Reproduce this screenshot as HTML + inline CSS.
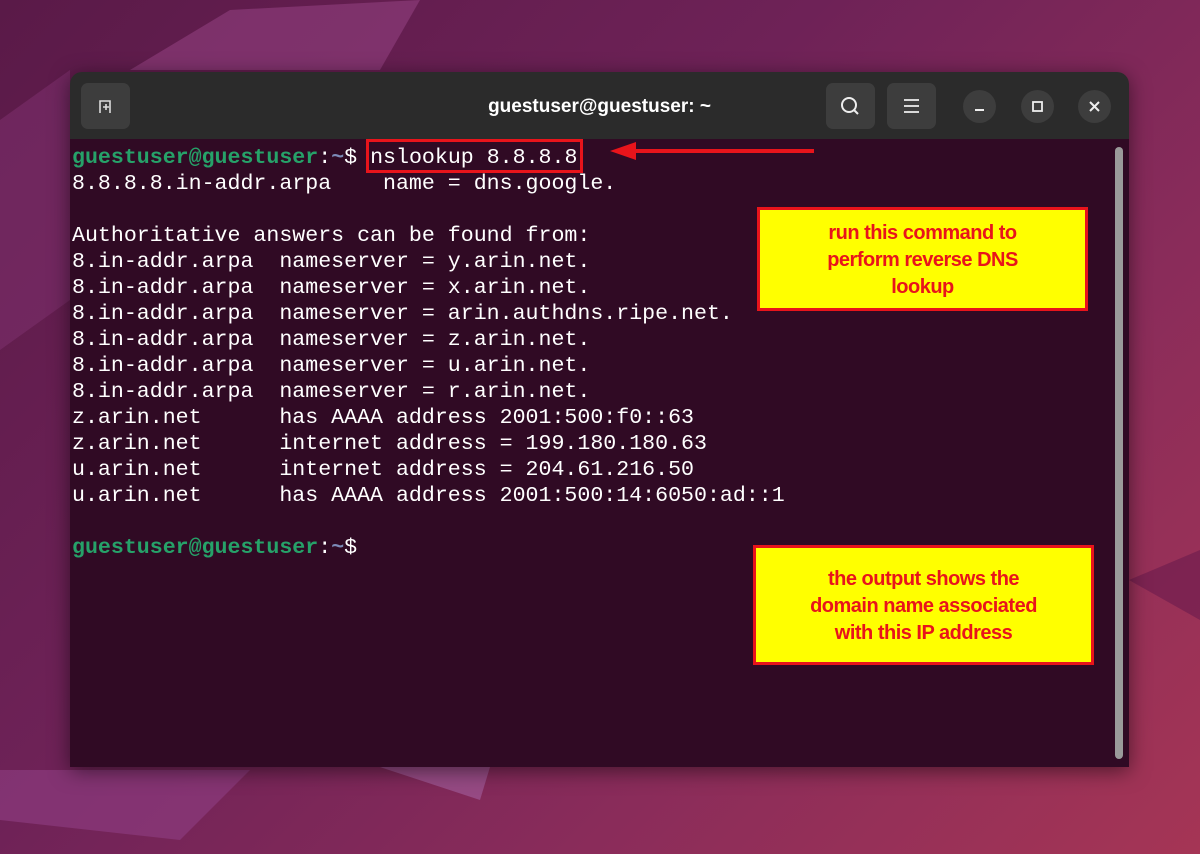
<!DOCTYPE html>
<html><head><meta charset="utf-8"><style>
*{margin:0;padding:0;box-sizing:border-box}
body{width:1200px;height:854px;overflow:hidden;position:relative;background:linear-gradient(135deg,#5a1a48 0%,#6e2257 40%,#8a2c5a 70%,#a53555 100%);font-family:"Liberation Sans",sans-serif}
.win{position:absolute;left:70px;top:72px;width:1059px;height:695px;border-radius:12px 12px 0 0;overflow:hidden;box-shadow:0 4px 20px rgba(0,0,0,.5)}
.hdr{height:67px;background:#2b2b2b;position:relative}
.title{position:absolute;left:0;right:0;top:24px;text-align:center;color:#fff;font-weight:bold;font-size:19px}
.btn{position:absolute;top:11px;width:49px;height:46px;background:#3d3d3d;border-radius:7px}
.cb{position:absolute;top:18px;width:33px;height:33px;background:#3d3d3d;border-radius:50%}
.body{position:absolute;top:67px;left:0;right:0;bottom:0;background:#300a24}
pre{position:absolute;left:2px;top:6px;font-family:"Liberation Mono",monospace;font-size:21.6px;line-height:26px;color:#fff;letter-spacing:0}
.g{color:#26a269;font-weight:bold}.b{color:#7c8bb8;font-weight:bold}
.sb{position:absolute;left:1045px;top:8px;width:8px;height:612px;background:#9a9a9a;border-radius:4px}
.note{position:absolute;background:#ffff00;border:3px solid #e8141b;color:#e8141b;font-weight:bold;text-align:center;font-size:20px;line-height:27px;letter-spacing:-0.5px}
</style></head><body>
<svg style="position:absolute;left:0;top:0" width="1200" height="854">
<polygon points="130,70 230,10 420,0 380,70" fill="#8a3a78" opacity=".7"/>
<polygon points="0,120 70,70 70,300 0,350" fill="#7c2f6a" opacity=".6"/>
<polygon points="0,770 250,770 180,840 0,820" fill="#8c3a7d" opacity=".7"/>
<polygon points="380,767 490,767 480,800" fill="#a460a0" opacity=".6"/>
<polygon points="1129,580 1200,550 1200,620" fill="#6a1b4d" opacity=".6"/>
</svg>
<div class="win">
<div class="hdr">
<div class="btn" style="left:11px"><svg width="49" height="46"><path d="M19 30V18h10v12M22 24h6M25 21v6" stroke="#ddd" stroke-width="1.6" fill="none"/></svg></div>
<div class="title">guestuser@guestuser: ~</div>
<div class="btn" style="left:756px"><svg width="49" height="46"><circle cx="23" cy="22" r="7" stroke="#eee" stroke-width="2" fill="none"/><path d="M28 27l4 4" stroke="#eee" stroke-width="2"/></svg></div>
<div class="btn" style="left:817px"><svg width="49" height="46"><path d="M17 17h15M17 23h15M17 29h15" stroke="#eee" stroke-width="1.8"/></svg></div>
<div class="cb" style="left:893px"><svg width="33" height="33"><path d="M12 20h9" stroke="#eee" stroke-width="2"/></svg></div>
<div class="cb" style="left:951px"><svg width="33" height="33"><rect x="12" y="12" width="9" height="9" stroke="#eee" stroke-width="1.8" fill="none"/></svg></div>
<div class="cb" style="left:1008px"><svg width="33" height="33"><path d="M12 12l9 9M21 12l-9 9" stroke="#eee" stroke-width="2"/></svg></div>
</div>
<div class="body">
<pre><span class="g">guestuser@guestuser</span>:<span class="b">~</span>$ nslookup 8.8.8.8
8.8.8.8.in-addr.arpa    name = dns.google.

Authoritative answers can be found from:
8.in-addr.arpa  nameserver = y.arin.net.
8.in-addr.arpa  nameserver = x.arin.net.
8.in-addr.arpa  nameserver = arin.authdns.ripe.net.
8.in-addr.arpa  nameserver = z.arin.net.
8.in-addr.arpa  nameserver = u.arin.net.
8.in-addr.arpa  nameserver = r.arin.net.
z.arin.net      has AAAA address 2001:500:f0::63
z.arin.net      internet address = 199.180.180.63
u.arin.net      internet address = 204.61.216.50
u.arin.net      has AAAA address 2001:500:14:6050:ad::1

<span class="g">guestuser@guestuser</span>:<span class="b">~</span>$</pre>
<div class="sb"></div>
</div>
</div>
<div style="position:absolute;left:366px;top:139px;width:217px;height:34px;border:3px solid #e8141b"></div>
<svg style="position:absolute;left:600px;top:140px" width="220" height="24"><path d="M214 11H30" stroke="#e8141b" stroke-width="4"/><polygon points="10,11 36,2 36,20" fill="#e8141b"/></svg>
<div class="note" style="left:757px;top:207px;width:331px;height:104px;padding-top:10px">run this command to<br>perform reverse DNS<br>lookup</div>
<div class="note" style="left:753px;top:545px;width:341px;height:120px;padding-top:18px">the output shows the<br>domain name associated<br>with this IP address</div>
</body></html>
